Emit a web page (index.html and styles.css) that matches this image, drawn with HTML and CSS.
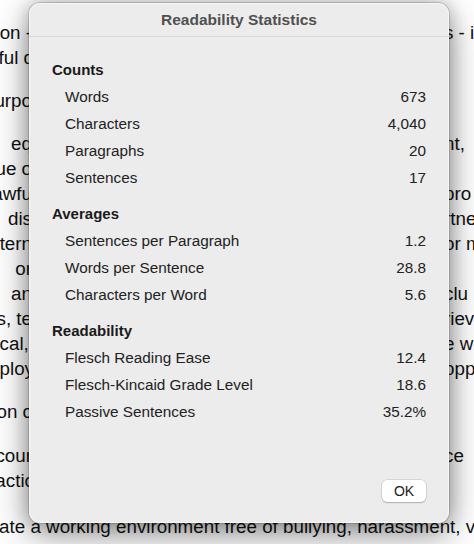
FILE: index.html
```html
<!DOCTYPE html>
<html lang="en">
<head>
<meta charset="utf-8">
<title>Readability Statistics</title>
<link rel="stylesheet" href="styles.css">
</head>
<body>
<div class="doc">
  <div class="ln pre"><span class="mid">employees, apply policy to every job type and purpose of</span></div>
  <div class="ln gap16"><span class="l">ion -</span><span class="sp"></span><span class="r">s - in</span></div>
  <div class="ln"><span class="l deep">eful d</span><span class="sp"></span><span class="r"></span></div>
  <div class="ln gap16"><span class="l">purpo</span><span class="sp"></span><span class="r"></span></div>
  <div class="ln gap18"><span class="l">eq</span><span class="sp"></span><span class="r">nt,</span></div>
  <div class="ln"><span class="l">gue o</span><span class="sp"></span><span class="r"></span></div>
  <div class="ln"><span class="l">lawfu</span><span class="sp"></span><span class="r">pro</span></div>
  <div class="ln"><span class="l">dis</span><span class="sp"></span><span class="r">rtne</span></div>
  <div class="ln"><span class="l">ntern</span><span class="sp"></span><span class="r">or m</span></div>
  <div class="ln"><span class="l">or</span><span class="sp"></span><span class="r"></span></div>
  <div class="ln"><span class="l">an</span><span class="sp"></span><span class="r">clu</span></div>
  <div class="ln"><span class="l">es, te</span><span class="sp"></span><span class="r">riev</span></div>
  <div class="ln"><span class="l deep">ical, </span><span class="sp"></span><span class="r">e w</span></div>
  <div class="ln"><span class="l deep">mploy</span><span class="sp"></span><span class="r">opp</span></div>
  <div class="ln gap18"><span class="l">ion c</span><span class="sp"></span><span class="r"></span></div>
  <div class="ln gap19"><span class="l">ncour</span><span class="sp"></span><span class="r">ce</span></div>
  <div class="ln"><span class="l deep">practic</span><span class="sp"></span><span class="r"></span></div>
  <div class="ln gap21 full">create a working environment free of bullying, harassment, victimisation</div>
</div>

<div class="dialog" role="dialog" aria-label="Readability Statistics">
  <div class="titlebar">Readability Statistics</div>
  <div class="content">
    <section class="group">
      <div class="heading">Counts</div>
      <div class="row"><span>Words</span><span>673</span></div>
      <div class="row"><span>Characters</span><span>4,040</span></div>
      <div class="row"><span>Paragraphs</span><span>20</span></div>
      <div class="row"><span>Sentences</span><span>17</span></div>
    </section>
    <section class="group">
      <div class="heading">Averages</div>
      <div class="row"><span>Sentences per Paragraph</span><span>1.2</span></div>
      <div class="row"><span>Words per Sentence</span><span>28.8</span></div>
      <div class="row"><span>Characters per Word</span><span>5.6</span></div>
    </section>
    <section class="group">
      <div class="heading">Readability</div>
      <div class="row"><span>Flesch Reading Ease</span><span>12.4</span></div>
      <div class="row"><span>Flesch-Kincaid Grade Level</span><span>18.6</span></div>
      <div class="row"><span>Passive Sentences</span><span>35.2%</span></div>
    </section>
  </div>
  <div class="footer"><button class="ok" type="button">OK</button></div>
</div>
</body>
</html>
```

FILE: styles.css
```css
html, body {
  margin: 0;
  padding: 0;
  background: #ffffff;
  width: 474px;
  height: 544px;
  overflow: hidden;
}

.doc {
  margin-top: -23px;
  font-family: "Liberation Sans", Arial, sans-serif;
  font-size: 18.8px;
  line-height: 25px;
  color: #111111;
}

.ln {
  display: flex;
  height: 25px;
  white-space: pre;
}

.gap16 { margin-top: 18px; }
.gap18 { margin-top: 18px; }
.gap19 { margin-top: 19px; }
.gap21 { margin-top: 21px; }

.l {
  flex: none;
  width: 32px;
  display: flex;
  justify-content: flex-end;
  overflow: hidden;
}

.l.deep {
  width: 34px;
}

.sp { flex: 1; }

.r {
  flex: none;
  width: 30px;
  overflow: hidden;
}

.pre {
  overflow: hidden;
}

.mid {
  display: block;
  width: 330px;
  margin-left: 96px;
  overflow: hidden;
}

.full {
  text-indent: -27px;
  overflow: hidden;
}

.dialog {
  position: absolute;
  left: 29px;
  top: 3px;
  width: 420px;
  height: 520px;
  background: #ececec;
  border-radius: 11px;
  box-shadow:
    0 0 0 1px rgba(0, 0, 0, 0.15),
    inset 0 0 0 1px rgba(255, 255, 255, 0.55),
    0 12px 36px rgba(0, 0, 0, 0.42),
    0 0 18px rgba(0, 0, 0, 0.24);
  display: flex;
  flex-direction: column;
  font-family: "Liberation Sans", Arial, sans-serif;
  color: #1f1f1f;
}

.titlebar {
  flex: none;
  height: 33px;
  border-bottom: 1px solid #d8d8d8;
  display: flex;
  align-items: center;
  justify-content: center;
  font-weight: bold;
  font-size: 15.5px;
  color: #505050;
}

.content {
  padding: 19px 23px 0 23px;
}

.group + .group {
  margin-top: 9px;
}

.heading {
  height: 27px;
  line-height: 27px;
  font-weight: bold;
  font-size: 15px;
  color: #1a1a1a;
}

.row {
  height: 27px;
  display: flex;
  align-items: center;
  justify-content: space-between;
  padding-left: 13px;
  font-size: 15.3px;
  color: #222222;
}

.footer {
  margin-top: auto;
  display: flex;
  justify-content: flex-end;
  padding: 0 23px 21px 0;
}

.ok {
  width: 44px;
  height: 22px;
  padding: 0;
  border: none;
  border-radius: 5px;
  background: #ffffff;
  box-shadow: 0 0 0 0.5px rgba(0, 0, 0, 0.18), 0 1px 1.5px rgba(0, 0, 0, 0.18);
  font-family: "Liberation Sans", Arial, sans-serif;
  font-size: 14px;
  color: #1a1a1a;
}
```
